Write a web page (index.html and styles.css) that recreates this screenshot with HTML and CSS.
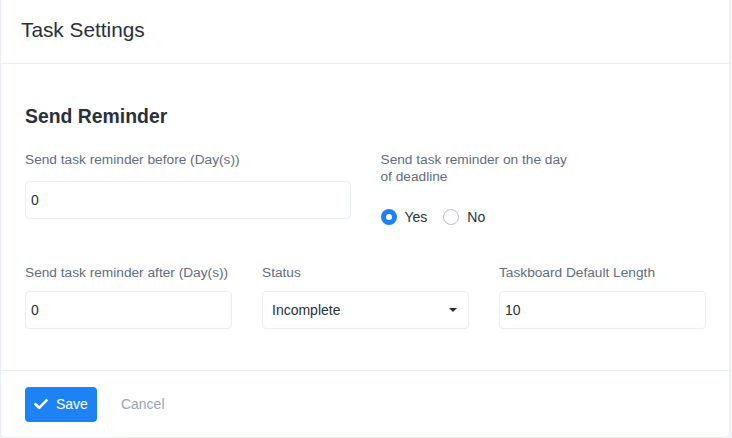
FILE: index.html
```html
<!DOCTYPE html>
<html lang="en">
<head>
<meta charset="utf-8">
<title>Task Settings</title>
<link rel="stylesheet" href="styles.css">
</head>
<body>
<div class="card">
  <div class="card-header">
    <h3 class="card-title">Task Settings</h3>
  </div>
  <div class="card-body">
    <h4 class="section-title">Send Reminder</h4>
    <div class="row row-two">
      <div class="field">
        <label class="field-label">Send task reminder before (Day(s))</label>
        <div class="input">0</div>
      </div>
      <div class="field">
        <label class="field-label narrow">Send task reminder on the day of deadline</label>
        <div class="radios">
          <span class="radio-item"><span class="radio checked"></span>Yes</span>
          <span class="radio-item"><span class="radio"></span>No</span>
        </div>
      </div>
    </div>
    <div class="row row-three">
      <div class="field">
        <label class="field-label tight">Send task reminder after (Day(s))</label>
        <div class="input">0</div>
      </div>
      <div class="field">
        <label class="field-label tight">Status</label>
        <div class="input select">Incomplete<span class="caret"></span></div>
      </div>
      <div class="field">
        <label class="field-label tight">Taskboard Default Length</label>
        <div class="input">10</div>
      </div>
    </div>
  </div>
  <div class="card-footer">
    <button class="btn-save" type="button">
      <svg class="check" width="14" height="14" viewBox="0 0 14 14" aria-hidden="true">
        <path d="M1.5 7.2 L5.2 10.8 L12.5 3.4" fill="none" stroke="#ffffff" stroke-width="2.6" stroke-linecap="round" stroke-linejoin="round"/>
      </svg>
      Save
    </button>
    <span class="btn-cancel">Cancel</span>
  </div>
</div>
</body>
</html>
```

FILE: styles.css
```css
* { box-sizing: border-box; }

html, body {
  margin: 0;
  padding: 0;
  background: #f2f4f7;
  font-family: "Liberation Sans", Arial, sans-serif;
  color: #28313c;
}

.card {
  width: 730px;
  background: #ffffff;
  border: 1px solid #e8eef3;
  border-top: none;
  border-radius: 0 0 5px 5px;
}

.card-header {
  height: 64px;
  border-bottom: 1px solid #e8eef3;
  padding: 18px 20px 0;
}

.card-title {
  margin: 0;
  font-size: 20.8px;
  line-height: 24px;
  font-weight: normal;
  color: #28313c;
}

.card-body {
  padding: 41px 23px 41px 24px;
}

.section-title {
  margin: 0 0 23px;
  font-size: 19.4px;
  line-height: 23px;
  font-weight: bold;
  color: #28313c;
}

.row {
  display: grid;
  column-gap: 30px;
  align-items: start;
}

.row-two { grid-template-columns: 1fr 1fr; }

.row-three {
  grid-template-columns: 1fr 1fr 1fr;
  margin-top: 38px;
}

.field { display: flex; flex-direction: column; }

.field-label {
  display: block;
  font-size: 13.7px;
  line-height: 17px;
  color: #616e80;
  margin-bottom: 13px;
  white-space: nowrap;
}

.field-label.narrow { max-width: 200px; margin-bottom: 23px; white-space: normal; }
.field-label.tight { margin-bottom: 9.5px; }

.input {
  height: 38px;
  border: 1px solid #e8eef3;
  border-radius: 4px;
  padding: 0 5px;
  font-size: 14px;
  line-height: 36px;
  color: #28313c;
  background: #ffffff;
}

.input.select {
  display: flex;
  align-items: center;
  justify-content: space-between;
  padding: 0 11px 0 9px;
}

.caret {
  width: 0;
  height: 0;
  border-left: 4px solid transparent;
  border-right: 4px solid transparent;
  border-top: 4px solid #28313c;
}

.radios {
  display: flex;
  align-items: center;
  height: 18px;
  gap: 16px;
  font-size: 14px;
  color: #28313c;
}

.radio-item {
  display: flex;
  align-items: center;
  gap: 8px;
}

.radio {
  width: 16px;
  height: 16px;
  border-radius: 50%;
  border: 1px solid #b9c0ca;
  background: #ffffff;
}

.radio.checked {
  border: 5px solid #1d82f5;
  background: #ffffff;
}

.card-footer {
  border-top: 1px solid #e8eef3;
  padding: 16px 24px 15px;
  display: flex;
  align-items: center;
  gap: 24px;
}

.btn-save {
  display: flex;
  align-items: center;
  gap: 8px;
  height: 35px;
  padding: 0 9px;
  border: none;
  border-radius: 4px;
  background: #1d82f5;
  color: #ffffff;
  font-family: "Liberation Sans", Arial, sans-serif;
  font-size: 14px;
}

.btn-cancel {
  font-size: 14px;
  color: #99a5b5;
}
```
